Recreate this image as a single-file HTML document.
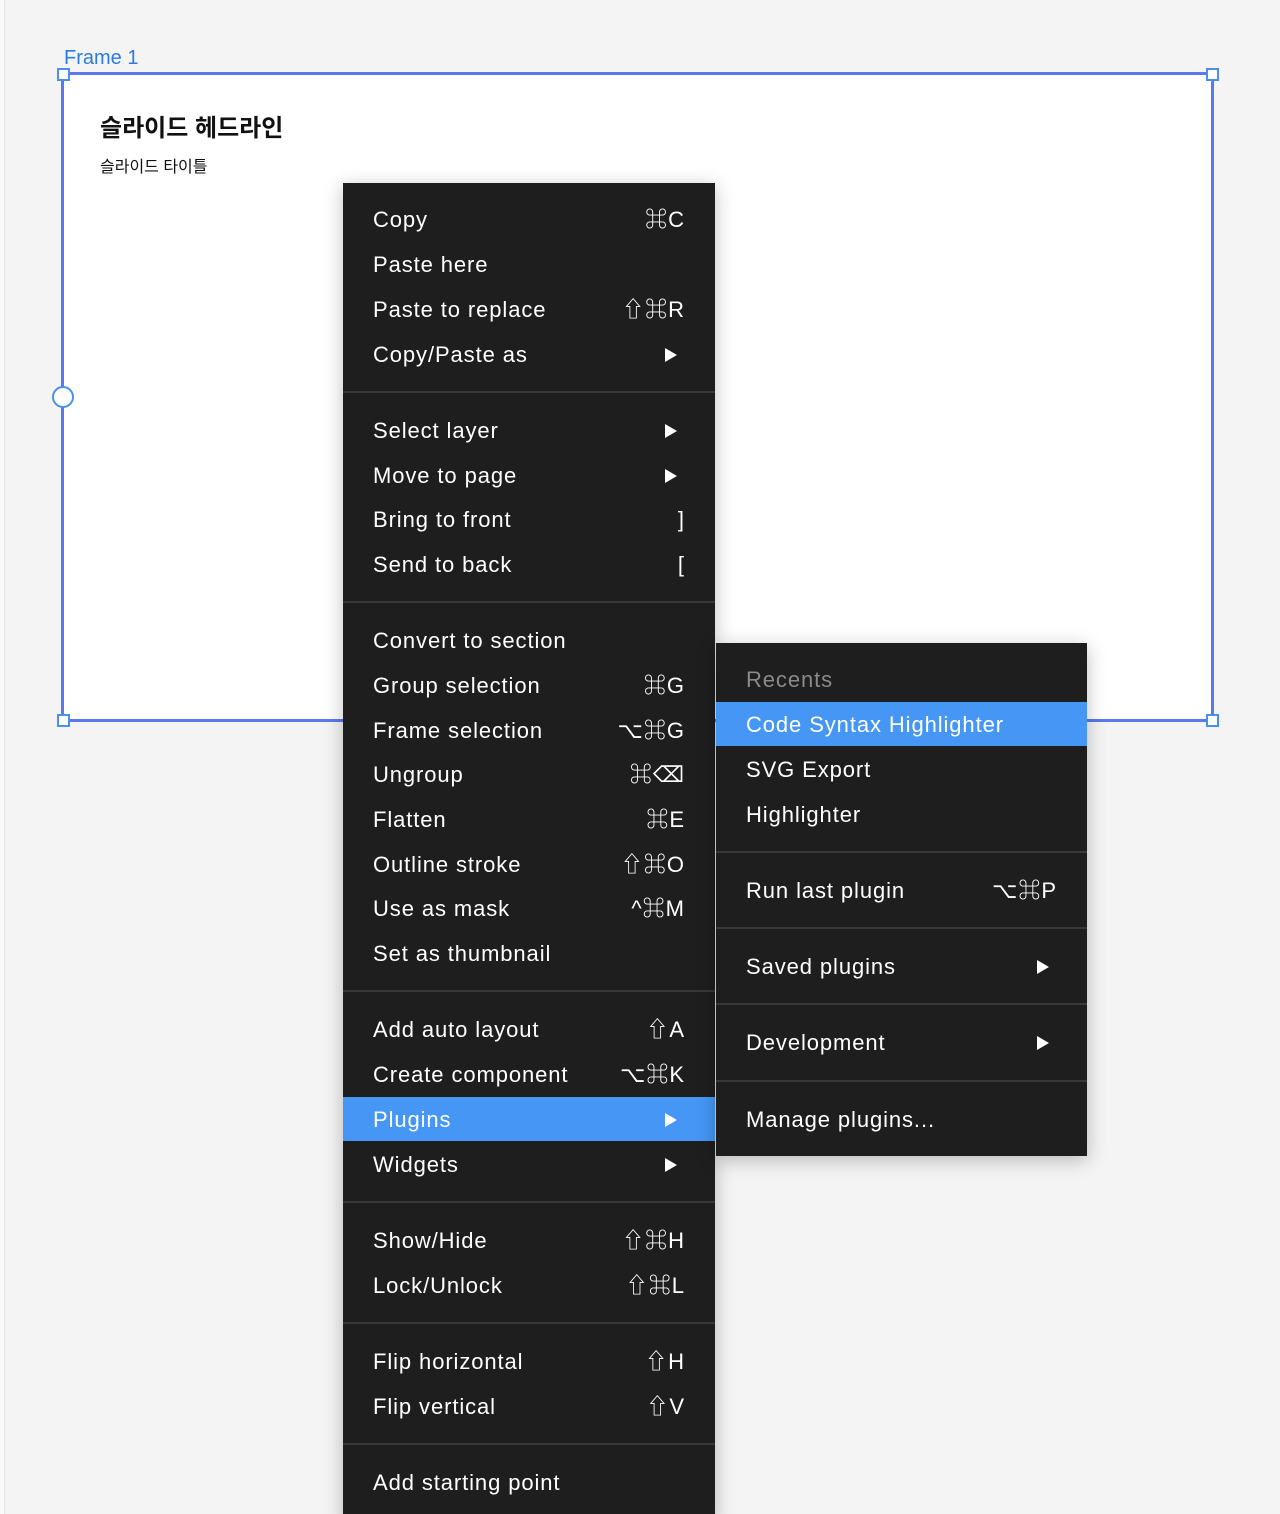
<!DOCTYPE html>
<html><head><meta charset="utf-8"><style>
*{margin:0;padding:0;box-sizing:border-box}
html,body{width:1280px;height:1514px;overflow:hidden}
body{background:#f4f4f4;position:relative;font-family:"Liberation Sans","Noto Sans CJK KR",sans-serif}
.side{position:absolute;left:0;top:0;width:5px;height:1514px;background:#fafafa;border-right:1px solid #e4e4e4}
.frame{position:absolute;left:61px;top:72px;width:1153px;height:650px;background:#fff;border:3px solid #5b78ee}
.h{position:absolute;width:13px;height:13px;background:#fff;border:2px solid #4a8ff0}
.menu{position:absolute;background:#1e1e1e;box-shadow:0 4px 18px rgba(0,0,0,.25);color:#fff;font-size:22px;letter-spacing:.9px;overflow:hidden}
.i{position:absolute;left:0;right:0;height:30px;line-height:30px;padding-left:30px;margin-top:1px}
.i .k{position:absolute;right:30px;top:0;letter-spacing:1px}
.i .a{position:absolute;right:38px;top:8px;width:0;height:0;border-left:12px solid #fff;border-top:7px solid transparent;border-bottom:7px solid transparent}
.hl{position:absolute;left:0;right:0;height:44px;background:#4596f5}
.sep{position:absolute;left:0;right:0;height:2px;background:#383838}
</style></head><body>
<div class="side"></div>
<div style="position:absolute;left:64px;top:47px;color:#2b7be0;font-size:20px">Frame 1</div>
<div class="frame">
<div style="position:absolute;left:36px;top:33px;font-size:24px;font-weight:bold;color:#111">슬라이드 헤드라인</div>
<div style="position:absolute;left:36px;top:78px;font-size:16px;color:#111">슬라이드 타이틀</div>
</div>
<div class="h" style="left:57px;top:68px"></div>
<div class="h" style="left:1206px;top:68px"></div>
<div class="h" style="left:57px;top:714px"></div>
<div class="h" style="left:1206px;top:714px"></div>
<div style="position:absolute;left:52px;top:386px;width:22px;height:22px;border-radius:50%;background:#fff;border:2.5px solid #4a8ff0"></div>

<div class="menu" style="left:343px;top:183px;width:372px;height:1340px">
<div class="i" style="top:21px">Copy<span class="k">⌘C</span></div>
<div class="i" style="top:66px">Paste here</div>
<div class="i" style="top:111px">Paste to replace<span class="k">⇧⌘R</span></div>
<div class="i" style="top:156px">Copy/Paste as<span class="a"></span></div>
<div class="sep" style="top:208px"></div>
<div class="i" style="top:232px">Select layer<span class="a"></span></div>
<div class="i" style="top:277px">Move to page<span class="a"></span></div>
<div class="i" style="top:321px">Bring to front<span class="k">]</span></div>
<div class="i" style="top:366px">Send to back<span class="k">[</span></div>
<div class="sep" style="top:418px"></div>
<div class="i" style="top:442px">Convert to section</div>
<div class="i" style="top:487px">Group selection<span class="k">⌘G</span></div>
<div class="i" style="top:532px">Frame selection<span class="k">⌥⌘G</span></div>
<div class="i" style="top:576px">Ungroup<span class="k">⌘⌫</span></div>
<div class="i" style="top:621px">Flatten<span class="k">⌘E</span></div>
<div class="i" style="top:666px">Outline stroke<span class="k">⇧⌘O</span></div>
<div class="i" style="top:710px">Use as mask<span class="k">^⌘M</span></div>
<div class="i" style="top:755px">Set as thumbnail</div>
<div class="sep" style="top:807px"></div>
<div class="i" style="top:831px">Add auto layout<span class="k">⇧A</span></div>
<div class="i" style="top:876px">Create component<span class="k">⌥⌘K</span></div>
<div class="hl" style="top:914px"></div>
<div class="i" style="top:921px">Plugins<span class="a"></span></div>
<div class="i" style="top:966px">Widgets<span class="a"></span></div>
<div class="sep" style="top:1018px"></div>
<div class="i" style="top:1042px">Show/Hide<span class="k">⇧⌘H</span></div>
<div class="i" style="top:1087px">Lock/Unlock<span class="k">⇧⌘L</span></div>
<div class="sep" style="top:1139px"></div>
<div class="i" style="top:1163px">Flip horizontal<span class="k">⇧H</span></div>
<div class="i" style="top:1208px">Flip vertical<span class="k">⇧V</span></div>
<div class="sep" style="top:1260px"></div>
<div class="i" style="top:1284px">Add starting point</div>
</div>

<div class="menu" style="left:716px;top:643px;width:371px;height:513px">
<div class="i" style="top:21px;color:#8a8a8a">Recents</div>
<div class="hl" style="top:59px"></div>
<div class="i" style="top:66px">Code Syntax Highlighter</div>
<div class="i" style="top:111px">SVG Export</div>
<div class="i" style="top:156px">Highlighter</div>
<div class="sep" style="top:208px"></div>
<div class="i" style="top:232px">Run last plugin<span class="k">⌥⌘P</span></div>
<div class="sep" style="top:284px"></div>
<div class="i" style="top:308px">Saved plugins<span class="a"></span></div>
<div class="sep" style="top:360px"></div>
<div class="i" style="top:384px">Development<span class="a"></span></div>
<div class="sep" style="top:437px"></div>
<div class="i" style="top:461px">Manage plugins...</div>
</div>
</body></html>
